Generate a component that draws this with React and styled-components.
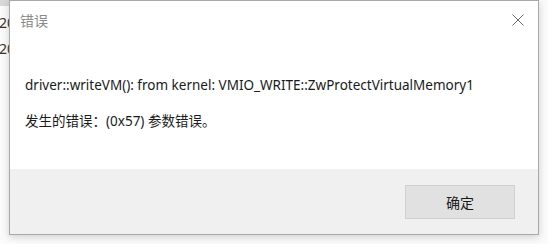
import React from "react";
import styled, { createGlobalStyle } from "styled-components";

const GlobalStyle = createGlobalStyle`
  html, body {
    margin: 0;
    padding: 0;
    background: #fbfbfb;
    font-family: "Noto Sans", "Noto Sans CJK SC", sans-serif;
  }
`;

const Screen = styled.div`
  width: 548px;
  height: 244px;
  display: flex;
  overflow: hidden;
  background: #fbfbfb;
`;

const BehindStrip = styled.div`
  width: 9px;
  flex: none;
  overflow: hidden;
  display: flex;
  flex-direction: column;
  .bar {
    height: 6px;
    background: #d8d8d8;
  }
  .line {
    margin-top: 7px;
    height: 20px;
    font-size: 14px;
    color: #333;
    white-space: nowrap;
    line-height: 20px;
    margin-left: -1px;
  }
  .line + .line {
    margin-top: 6px;
  }
`;

const Dialog = styled.div`
  width: 528px;
  height: 233px;
  border: 1px solid #a8a8a8;
  background: #fff;
  display: flex;
  flex-direction: column;
  box-shadow: 0 2px 8px rgba(0, 0, 0, 0.18);
`;

const TitleBar = styled.div`
  height: 38px;
  display: flex;
  align-items: center;
  justify-content: space-between;
  padding: 0 14px 0 10px;
  .title {
    font-size: 14px;
    color: #8a8a8a;
  }
`;

const Body = styled.div`
  flex: 1;
  padding: 36px 0 0 15px;
  display: flex;
  flex-direction: column;
  gap: 16px;
  font-size: 13.5px;
  color: #1a1a1a;
  line-height: 20px;
`;

const Footer = styled.div`
  height: 65px;
  background: #f0f0f0;
  display: flex;
  align-items: center;
  justify-content: flex-end;
  padding-right: 23px;
`;

const Button = styled.button`
  width: 110px;
  height: 34px;
  background: #e1e1e1;
  border: 1px solid #d0d0d0;
  font-family: inherit;
  font-size: 14px;
  color: #1a1a1a;
  padding: 0;
`;

function CloseIcon() {
  return (
    <svg width="12" height="12" viewBox="0 0 12 12">
      <path d="M0.5 0.5 L11.5 11.5 M11.5 0.5 L0.5 11.5" stroke="#6a6a6a" strokeWidth="1" />
    </svg>
  );
}

export default function App() {
  return (
    <>
      <GlobalStyle />
      <Screen>
        <BehindStrip>
          <div className="bar" />
          <div className="line">20</div>
          <div className="line">20</div>
        </BehindStrip>
        <Dialog>
          <TitleBar>
            <span className="title">错误</span>
            <CloseIcon />
          </TitleBar>
          <Body>
            <div>driver::writeVM(): from kernel: VMIO_WRITE::ZwProtectVirtualMemory1</div>
            <div>发生的错误：(0x57) 参数错误。</div>
          </Body>
          <Footer>
            <Button>确定</Button>
          </Footer>
        </Dialog>
      </Screen>
    </>
  );
}
